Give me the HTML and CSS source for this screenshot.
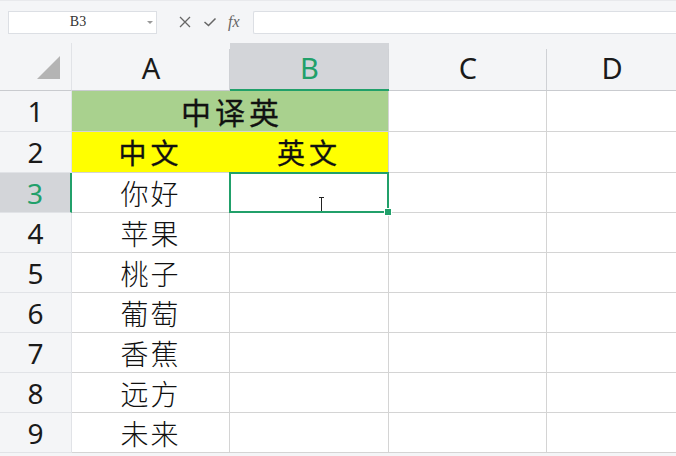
FILE: index.html
```html
<!DOCTYPE html>
<html lang="zh">
<head>
    <meta charset="UTF-8">
    <title>中译英</title>
    <link rel="stylesheet" href="styles.css">
</head>
<body>
    <div class="toolbar">
        <div class="name-box">
            <span class="name-text">B3</span>
            <span class="name-arrow"></span>
        </div>
        <div class="formula-icons">
            <svg class="icon" width="14" height="14" viewBox="0 0 14 14"><path d="M2 2 L12 12 M12 2 L2 12" stroke="#666" stroke-width="1.3" fill="none"/></svg>
            <svg class="icon" width="14" height="14" viewBox="0 0 14 14"><path d="M1.5 7 L5.5 10.5 L12.5 3.5" stroke="#666" stroke-width="1.5" fill="none"/></svg>
            <span class="fx">fx</span>
        </div>
        <div class="formula-input"></div>
    </div>

    <div class="sheet">
        <div class="corner"><span class="corner-tri"></span></div>
        <div class="col-head">A</div>
        <div class="col-head active">B</div>
        <div class="col-head">C</div>
        <div class="col-head">D</div>

        <div class="row-head">1</div>
        <div class="cell title">中译英</div>
        <div class="cell"></div>
        <div class="cell"></div>

        <div class="row-head">2</div>
        <div class="cell head">中文</div>
        <div class="cell head">英文</div>
        <div class="cell"></div>
        <div class="cell"></div>

        <div class="row-head active">3</div>
        <div class="cell">你好</div>
        <div class="cell selected"><span class="ibeam"></span></div>
        <div class="cell"></div>
        <div class="cell"></div>

        <div class="row-head">4</div>
        <div class="cell">苹果</div>
        <div class="cell"></div>
        <div class="cell"></div>
        <div class="cell"></div>

        <div class="row-head">5</div>
        <div class="cell">桃子</div>
        <div class="cell"></div>
        <div class="cell"></div>
        <div class="cell"></div>

        <div class="row-head">6</div>
        <div class="cell">葡萄</div>
        <div class="cell"></div>
        <div class="cell"></div>
        <div class="cell"></div>

        <div class="row-head">7</div>
        <div class="cell">香蕉</div>
        <div class="cell"></div>
        <div class="cell"></div>
        <div class="cell"></div>

        <div class="row-head">8</div>
        <div class="cell">远方</div>
        <div class="cell"></div>
        <div class="cell"></div>
        <div class="cell"></div>

        <div class="row-head">9</div>
        <div class="cell">未来</div>
        <div class="cell"></div>
        <div class="cell"></div>
        <div class="cell"></div>
    </div>
</body>
</html>
```

FILE: styles.css
```css
* {
    margin: 0;
    padding: 0;
    box-sizing: border-box;
}

body {
    width: 676px;
    height: 456px;
    overflow: hidden;
    background: #f4f5f7;
    font-family: "Noto Sans", "Noto Sans CJK SC", sans-serif;
    color: #1a1a1a;
}

.toolbar {
    height: 43px;
    display: flex;
    align-items: center;
    padding: 0 0 0 8px;
    border-top: 1px solid #e8e9ec;
}

.name-box {
    width: 149px;
    height: 23px;
    background: #fff;
    border: 1px solid #dcdfe4;
    display: flex;
    align-items: center;
    position: relative;
}

.name-text {
    flex: 1;
    text-align: center;
    font-family: "Liberation Serif", serif;
    font-size: 14px;
    color: #333;
}

.name-arrow {
    width: 0;
    height: 0;
    border-left: 3px solid transparent;
    border-right: 3px solid transparent;
    border-top: 3px solid #999;
    margin-right: 3px;
}

.formula-icons {
    width: 96px;
    display: flex;
    align-items: center;
    gap: 11px;
    padding-left: 21px;
}

.fx {
    font-family: "Liberation Serif", serif;
    font-style: italic;
    font-size: 16px;
    color: #666;
}

.formula-input {
    flex: 1;
    height: 23px;
    background: #fff;
    border: 1px solid #dcdfe4;
    border-right: none;
    border-radius: 2px 0 0 2px;
}

.sheet {
    display: grid;
    grid-template-columns: 72px 158px 159px 158px 130px;
    grid-template-rows: 48px 41px 41px repeat(7, 40px);
    background: #fff;
}

.corner {
    background: #f4f5f7;
    border-right: 1px solid #e1e3e7;
    border-bottom: 1px solid #c9cbcf;
    position: relative;
}

.corner-tri {
    position: absolute;
    left: 37px;
    top: 13px;
    width: 0;
    height: 0;
    border-left: 23px solid transparent;
    border-bottom: 23px solid #b4b4b4;
}

.col-head {
    display: flex;
    align-items: center;
    justify-content: center;
    font-size: 29px;
    padding-top: 1px;
    background: #f4f5f7;
    border-bottom: 1px solid #c9cbcf;
    border-top: 1px solid transparent;
    position: relative;
}

.col-head::before {
    content: "";
    position: absolute;
    right: 0;
    top: 5px;
    bottom: 0;
    width: 1px;
    background: #cfd1d5;
}

.col-head.active {
    background: #d3d5d9;
    color: #21a06a;
    border-bottom: 2px solid #21a06a;
}

.row-head {
    display: flex;
    align-items: center;
    justify-content: center;
    font-size: 28px;
    background: #f4f5f7;
    border-right: 1px solid #e1e3e7;
    border-bottom: 1px solid #e1e3e7;
}

.row-head.active {
    background: #d3d5d9;
    color: #21a06a;
    border-right: 2px solid #21a06a;
}

.cell {
    display: flex;
    align-items: center;
    justify-content: center;
    background: #fff;
    border-right: 1px solid #d4d4d4;
    border-bottom: 1px solid #d4d4d4;
    font-family: "Noto Sans CJK SC", sans-serif;
    font-size: 28px;
    font-weight: 300;
    letter-spacing: 2px;
    color: #111;
    position: relative;
}

.cell.title {
    grid-column: span 2;
    background: #a9d18e;
    font-size: 30px;
    font-weight: 400;
    -webkit-text-stroke: 0.3px #111;
    letter-spacing: 4px;
    padding-left: 4px;
}

.cell.head {
    background: #ffff00;
    font-weight: 400;
    -webkit-text-stroke: 0.3px #111;
    letter-spacing: 4px;
    border-right-color: #ffff00;
}

.cell.head + .cell.head {
    border-right-color: #d4d4d4;
}

.cell.selected::after {
    content: "";
    position: absolute;
    left: -1px;
    top: -1px;
    right: -1px;
    bottom: -1px;
    border: 2px solid #21a06a;
}

.cell.selected::before {
    content: "";
    position: absolute;
    right: -4px;
    bottom: -4px;
    width: 6px;
    height: 6px;
    background: #21a06a;
    border: 1px solid #fff;
    z-index: 1;
}

.ibeam {
    position: absolute;
    left: 91px;
    top: 24px;
    width: 1px;
    height: 15px;
    background: #222;
}

.ibeam::before,
.ibeam::after {
    content: "";
    position: absolute;
    left: -2px;
    width: 5px;
    height: 1px;
    background: #222;
}

.ibeam::before {
    top: 0;
}

.ibeam::after {
    bottom: 0;
}
```
